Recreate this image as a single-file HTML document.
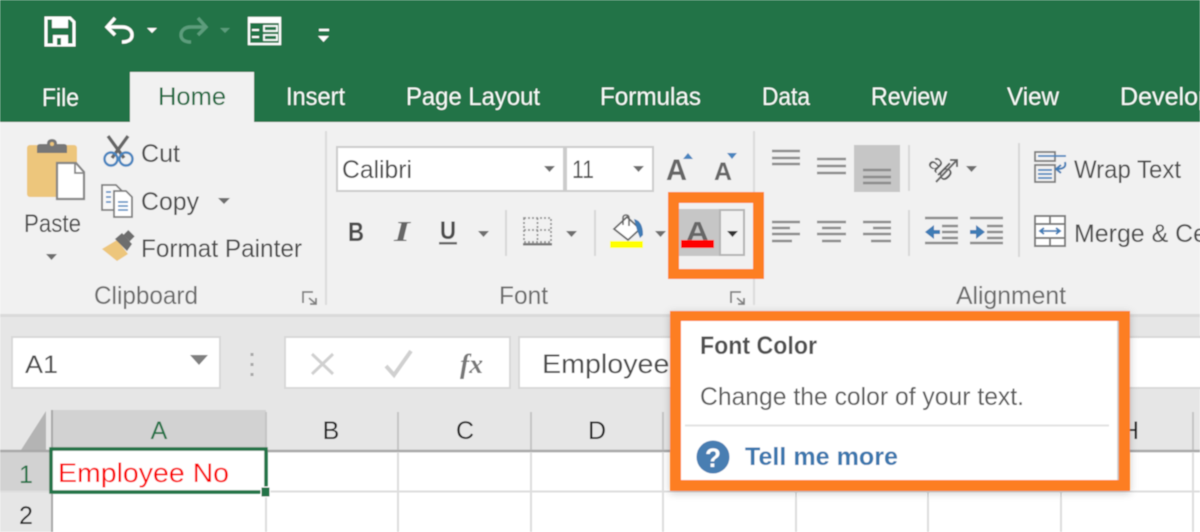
<!DOCTYPE html>
<html lang="en"><head><meta charset="utf-8"><title>Font Color</title>
<style>
html,body{margin:0;padding:0;width:1200px;height:532px;overflow:hidden;background:#fff}
svg{display:block}
text{font-family:"Liberation Sans",sans-serif;font-size:25px;fill:#4c4c4c}
.g{fill:none;stroke:#7a7a7a;stroke-width:2}
.n{fill:none;stroke:#8c8c8c;stroke-width:2.4}
.c{fill:#6e6e6e}
.m{text-anchor:middle}
</style></head><body>
<svg width="1200" height="532" viewBox="0 0 1200 532" xmlns="http://www.w3.org/2000/svg">
<defs><filter id="s" x="-5%" y="-5%" width="110%" height="115%"><feDropShadow dx="0" dy="2" stdDeviation="4" flood-color="#000" flood-opacity=".22"/></filter>
<filter id="b"><feGaussianBlur stdDeviation=".4"/></filter></defs>
<g filter="url(#b)">
<!-- title bar -->
<rect width="1200" height="122" fill="#217346"/>
<rect x="130" y="72" width="124" height="50" fill="#f1f1f1"/>
<!-- save -->
<path d="M46 18h24l4 4v23H46z" fill="none" stroke="#fff" stroke-width="3"/>
<rect x="52" y="18" width="16" height="10" fill="#fff"/><rect x="53" y="35" width="15" height="10" fill="#fff"/><rect x="57" y="38" width="4" height="7" fill="#217346"/>
<!-- undo -->
<path d="M115 18l-8 9 8 8" fill="none" stroke="#fff" stroke-width="3.4"/><path d="M108 27h14c7 0 10 4 10 8s-3 7-10 7" fill="none" stroke="#fff" stroke-width="3.4"/>
<path d="M147 28h10l-5 5z" fill="#fff"/>
<!-- redo -->
<path d="M198 18l8 9-8 8" fill="none" stroke="#5c9c7b" stroke-width="3.4"/><path d="M205 27h-14c-7 0-10 4-10 8s3 7 10 7" fill="none" stroke="#5c9c7b" stroke-width="3.4"/>
<path d="M220 28h10l-5 5z" fill="#5c9c7b"/>
<!-- form -->
<rect x="249" y="18" width="31" height="26" fill="none" stroke="#fff" stroke-width="2.4"/><rect x="249" y="17" width="32" height="6" fill="#fff"/>
<path d="M252 30h7M252 37h7" stroke="#fff" stroke-width="2"/><rect x="264" y="26" width="13" height="5" fill="none" stroke="#fff" stroke-width="1.8"/><rect x="264" y="35" width="13" height="5" fill="none" stroke="#fff" stroke-width="1.8"/>
<!-- customize -->
<path d="M319 30h10" stroke="#fff" stroke-width="2.4"/><path d="M318 36h11l-5.500 6z" fill="#fff"/>
<!-- tabs -->
<text x="42" y="106" textLength="37" lengthAdjust="spacingAndGlyphs" style="fill:#f8fbf9">File</text>
<text x="158" y="105" textLength="68" lengthAdjust="spacingAndGlyphs" style="fill:#1c6b3f">Home</text>
<text x="286" y="105" textLength="59" lengthAdjust="spacingAndGlyphs" style="fill:#f8fbf9">Insert</text>
<text x="406" y="105" textLength="134" lengthAdjust="spacingAndGlyphs" style="fill:#f8fbf9">Page Layout</text>
<text x="600" y="105" textLength="101" lengthAdjust="spacingAndGlyphs" style="fill:#f8fbf9">Formulas</text>
<text x="762" y="105" textLength="48" lengthAdjust="spacingAndGlyphs" style="fill:#f8fbf9">Data</text>
<text x="871" y="105" textLength="76" lengthAdjust="spacingAndGlyphs" style="fill:#f8fbf9">Review</text>
<text x="1007" y="105" textLength="52" lengthAdjust="spacingAndGlyphs" style="fill:#f8fbf9">View</text>
<text x="1120" y="105" textLength="92" lengthAdjust="spacingAndGlyphs" style="fill:#f8fbf9">Develop</text>
<!-- ribbon -->
<rect y="122" width="1200" height="192" fill="#f1f1f1"/>
<rect y="314" width="1200" height="3" fill="#dadada"/>
<rect y="317" width="1200" height="93" fill="#e6e6e6"/>
<path d="M326 131v174M754 131v174" stroke="#dcdcdc" stroke-width="2"/>
<path d="M506 210v46M595 210v46M909 145v46M909 210v46M1019 143v114" stroke="#d8d8d8" stroke-width="2"/>
<!-- paste -->
<rect x="27" y="145" width="50" height="52" rx="3" fill="#edc67c"/>
<path d="M37 153v-6q0-3 3-3h7q0-5 5-5t5 5h7q3 0 3 3v6z" fill="#777"/><circle cx="52" cy="144" r="2" fill="#edc67c"/>
<path d="M57 163h19l8 9v27H57z" fill="#fff" stroke="#858585" stroke-width="2.2"/><path d="M75 163v10h9" fill="none" stroke="#858585" stroke-width="1.8"/>
<text x="24" y="232" textLength="57" lengthAdjust="spacingAndGlyphs">Paste</text>
<path d="M46 254h11l-5.500 6z" class="c"/>
<!-- cut -->
<path d="M108 136l16 22M128 136l-16 22" stroke="#666" stroke-width="3.4" fill="none"/>
<circle cx="111" cy="159" r="6.500" fill="none" stroke="#4a85bf" stroke-width="2.4"/><circle cx="126" cy="159" r="6.500" fill="none" stroke="#4a85bf" stroke-width="2.4"/>
<text x="141" y="162" textLength="39" lengthAdjust="spacingAndGlyphs">Cut</text>
<!-- copy -->
<path d="M102 185h14l6 6v19h-20z" fill="#f8f8f8" stroke="#7d7d7d" stroke-width="1.800"/>
<path d="M114 191h12l6 6v20h-18z" fill="#fff" stroke="#7d7d7d" stroke-width="1.800"/>
<path d="M106 192h5M106 197h5M106 202h5M118 202h10M118 206h10M118 210h10" stroke="#4a85bf" stroke-width="1.600"/>
<text x="141" y="210" textLength="58" lengthAdjust="spacingAndGlyphs">Copy</text>
<path d="M218 198h12l-6 6z" class="c"/>
<!-- painter -->
<path d="M102 249l15-9 11 14-11 7z" fill="#edc67c"/><path d="M115 239l7-6 10 11-5 7z" fill="#6e6e6e"/><rect x="125" y="232" width="9" height="7" transform="rotate(45 129 235)" fill="#6e6e6e"/>
<text x="141" y="257" textLength="161" lengthAdjust="spacingAndGlyphs">Format Painter</text>
<text x="94" y="304" textLength="104" lengthAdjust="spacingAndGlyphs" style="fill:#6a6a6a">Clipboard</text>
<path d="M303 303v-11h10M309 298l7 6M316 298v6h-6" fill="none" stroke="#808080" stroke-width="1.800"/>
<!-- font row -->
<rect x="337" y="147" width="227" height="44" fill="#fff" stroke="#cccccc" stroke-width="2"/>
<rect x="566" y="147" width="87" height="44" fill="#fff" stroke="#cccccc" stroke-width="2"/>
<text x="342" y="178" textLength="70" lengthAdjust="spacingAndGlyphs">Calibri</text>
<text x="572" y="178" textLength="22" lengthAdjust="spacingAndGlyphs">11</text>
<path d="M544 166h11l-5.500 6zM633 166h11l-5.500 6z" class="c"/>
<text x="666" y="180" style="font-size:30px;font-weight:bold;fill:#666" textLength="21" lengthAdjust="spacingAndGlyphs">A</text>
<path d="M683 159l5-6 5 6z" fill="#4a85bf"/>
<text x="714" y="180" style="font-size:25px;font-weight:bold;fill:#666" textLength="18" lengthAdjust="spacingAndGlyphs">A</text>
<path d="M727 153h10l-5 6z" fill="#4a85bf"/>
<!-- BIU -->
<text x="348" y="241" style="font-size:27px;font-weight:bold;fill:#4c4c4c" textLength="16" lengthAdjust="spacingAndGlyphs">B</text>
<text x="394" y="241" style="font-size:29px;font-weight:bold;font-style:italic;fill:#666;font-family:'Liberation Serif',serif" textLength="16" lengthAdjust="spacingAndGlyphs">I</text>
<text x="440" y="239" style="font-size:25px;font-weight:bold;fill:#4c4c4c" textLength="16" lengthAdjust="spacingAndGlyphs">U</text>
<rect x="439" y="242" width="18" height="2.500" fill="#666"/>
<path d="M478 231h11l-5.500 6zM566 231h11l-5.500 6zM655 231h11l-5.500 6z" class="c"/>
<!-- borders -->
<path d="M524 218h27v24h-27zM537.500 218v24M524 230h27" fill="none" stroke="#8e8e8e" stroke-width="1.800" stroke-dasharray="2 2"/>
<rect x="523" y="243" width="29" height="2.500" fill="#7a7a7a"/>
<!-- fill -->
<path d="M614 229l13-12 13 12-12 11z" fill="#fff" stroke="#666" stroke-width="1.800"/>
<path d="M623 225v-7q0-3 3-3t3 3v8" fill="none" stroke="#666" stroke-width="1.600"/>
<path d="M634 219q9 2 9 16l-3 3-3-8z" fill="#3f7bb5"/>
<rect x="610" y="241" width="33" height="7" fill="#ffff00"/>
<!-- font color with highlight -->
<rect x="668" y="192" width="96" height="87" fill="#fd7e23"/>
<rect x="679" y="203" width="74" height="66" fill="#f1f1f1"/>
<rect x="679" y="209" width="40" height="47" fill="#c6c6c6"/>
<rect x="720" y="210" width="24" height="45" fill="#f1f1f1" stroke="#b4b4b4" stroke-width="2"/>
<text x="686" y="241" style="font-size:28px;font-weight:bold;fill:#666" textLength="23" lengthAdjust="spacingAndGlyphs">A</text>
<rect x="681" y="240" width="33" height="8" fill="#fe0000"/>
<path d="M727 231h11l-5.500 6z" fill="#333"/>
<text x="499" y="304" textLength="49" lengthAdjust="spacingAndGlyphs" style="fill:#6a6a6a">Font</text>
<path d="M731 303v-11h10M737 298l7 6M744 298v6h-6" fill="none" stroke="#808080" stroke-width="1.800"/>
<!-- alignment -->
<rect x="854" y="145" width="46" height="47" fill="#c6c6c6"/>
<path class="n" d="M772 151h28M772 158h28M772 164h28M817 159h29M817 166h29M817 173h29M863 170h28M863 177h28M863 183h28"/>
<path class="n" d="M772 222h28M772 228h18M772 234h28M772 241h20M817 222h29M822 228h19M817 234h29M822 241h19M863 222h28M873 228h18M863 234h28M871 241h20"/>
<!-- orientation -->
<text x="0" y="0" transform="translate(927 164) rotate(45)" style="font-size:23px;fill:#5c5c5c" textLength="26" lengthAdjust="spacingAndGlyphs">ab</text>
<path d="M936 182l20-21M950 160h7v7" fill="none" stroke="#666" stroke-width="2"/>
<path d="M966 166h11l-5.500 6z" class="c"/>
<!-- indent -->
<path class="n" d="M925 218h33M942 226h16M942 232h16M942 238h16M925 243h33M970 218h33M987 226h16M987 232h16M987 238h16M970 243h33"/>
<path d="M925 232l9-7v5h6v4h-6v5zM985 232l-9-7v5h-6v4h6v5z" fill="#3f7bb5"/>
<!-- wrap -->
<rect x="1035" y="152" width="20" height="9" fill="none" stroke="#7a7a7a" stroke-width="1.800"/>
<rect x="1035" y="165" width="20" height="17" fill="none" stroke="#7a7a7a" stroke-width="1.800"/>
<path d="M1038 156h28M1038 170h14M1038 174h14M1038 178h14" stroke="#4a85bf" stroke-width="1.800" fill="none"/>
<path d="M1065 162q2 7-8 7M1061 165l-5 4 5 4" fill="none" stroke="#3f7bb5" stroke-width="2"/>
<text x="1074" y="178" textLength="107" lengthAdjust="spacingAndGlyphs">Wrap Text</text>
<!-- merge -->
<rect x="1035" y="216" width="30" height="30" fill="#fff" stroke="#7a7a7a" stroke-width="2"/>
<path d="M1035 224h30M1035 238h30M1050 216v8M1050 238v8" stroke="#7a7a7a" stroke-width="2"/>
<path d="M1041 231h18M1044 228l-4 3 4 3M1056 228l4 3-4 3" fill="none" stroke="#3f7bb5" stroke-width="1.800"/>
<text x="1074" y="242" textLength="176" lengthAdjust="spacingAndGlyphs">Merge &amp; Center</text>
<text x="956" y="304" textLength="110" lengthAdjust="spacingAndGlyphs" style="fill:#6a6a6a">Alignment</text>
<!-- formula bar -->
<rect x="12" y="337" width="208" height="51" fill="#fff" stroke="#d8d8d8" stroke-width="2"/>
<text x="25" y="373" textLength="33" lengthAdjust="spacingAndGlyphs">A1</text>
<path d="M190 355h18l-9 10z" fill="#808080"/>
<path d="M252 353v3M252 363v3M252 373v3" stroke="#a8a8a8" stroke-width="3"/>
<rect x="285" y="337" width="225" height="51" fill="#fff" stroke="#d8d8d8" stroke-width="2"/>
<path d="M312 354l21 20M333 354l-21 20" stroke="#d0d0d0" stroke-width="3"/>
<path d="M386 366l8 9 17-24" fill="none" stroke="#d0d0d0" stroke-width="4"/>
<text x="460" y="373" style="font-family:'Liberation Serif',serif;font-style:italic;font-weight:bold;font-size:27px;fill:#777" textLength="23" lengthAdjust="spacingAndGlyphs">fx</text>
<rect x="519" y="337" width="690" height="51" fill="#fff" stroke="#d8d8d8" stroke-width="2"/>
<text x="542" y="373" textLength="172" lengthAdjust="spacingAndGlyphs" style="font-size:27px">Employee No</text>
<!-- headers -->
<rect y="410" width="1200" height="40" fill="#e6e6e6"/>
<rect y="450" width="52" height="82" fill="#e6e6e6"/>
<rect x="52" y="410" width="214" height="40" fill="#d2d2d2"/>
<rect y="450" width="52" height="41" fill="#d2d2d2"/>
<path d="M46 420v39H21z" transform="translate(0 -9)" fill="#b4b4b4"/>
<path d="M0 451h1200" stroke="#a8a8a8" stroke-width="2.500"/>
<path d="M52 410v122" stroke="#a8a8a8" stroke-width="2"/>
<path d="M266 412v38M398 412v38M531 412v38M663 412v38M796 412v38M928 412v38M1061 412v38M1193 412v38" stroke="#c4c4c4" stroke-width="2"/>
<path d="M266 452v80M398 452v80M531 452v80M663 452v80M796 452v80M928 452v80M1061 452v80M1193 452v80M0 491.500h1200" stroke="#dedede" stroke-width="2"/>
<text x="159" y="439" class="m" style="fill:#217346">A</text>
<text x="331" y="439" class="m" style="fill:#222">B</text>
<text x="465" y="439" class="m" style="fill:#222">C</text>
<text x="597" y="439" class="m" style="fill:#222">D</text>
<text x="1130" y="439" class="m" style="fill:#222">H</text>
<text x="26" y="483" class="m" style="fill:#217346">1</text>
<text x="26" y="524" class="m" style="fill:#222">2</text>
<rect x="51" y="449" width="215" height="43" fill="#fff" stroke="#217346" stroke-width="3.500"/>
<rect x="261" y="487" width="9" height="10" fill="#217346" stroke="#fff" stroke-width="1"/>
<text x="58" y="482" textLength="171" lengthAdjust="spacingAndGlyphs" style="fill:#fa0000;font-size:27px">Employee No</text>
<!-- tooltip -->
<rect x="670" y="311" width="460" height="180" fill="#fd7e23" filter="url(#s)"/>
<rect x="681" y="321" width="437" height="159" fill="#fff"/>
<path d="M1118 321v159" stroke="#c4c8cc" stroke-width="1.500"/>
<text x="700" y="354" textLength="117" lengthAdjust="spacingAndGlyphs" style="font-weight:bold;fill:#505050">Font Color</text>
<text x="700" y="405" textLength="324" lengthAdjust="spacingAndGlyphs" style="fill:#5a5a5a">Change the color of your text.</text>
<path d="M685 425.500h424" stroke="#e2e2e2" stroke-width="2"/>
<circle cx="713" cy="457" r="16.500" fill="#4a7eb2"/>
<text x="705" y="467" style="font-size:27px;font-weight:bold;fill:#fff" textLength="16" lengthAdjust="spacingAndGlyphs">?</text>
<text x="745" y="465" textLength="153" lengthAdjust="spacingAndGlyphs" style="font-weight:bold;fill:#3b77ae">Tell me more</text>
</g>
</svg>
</body></html>
